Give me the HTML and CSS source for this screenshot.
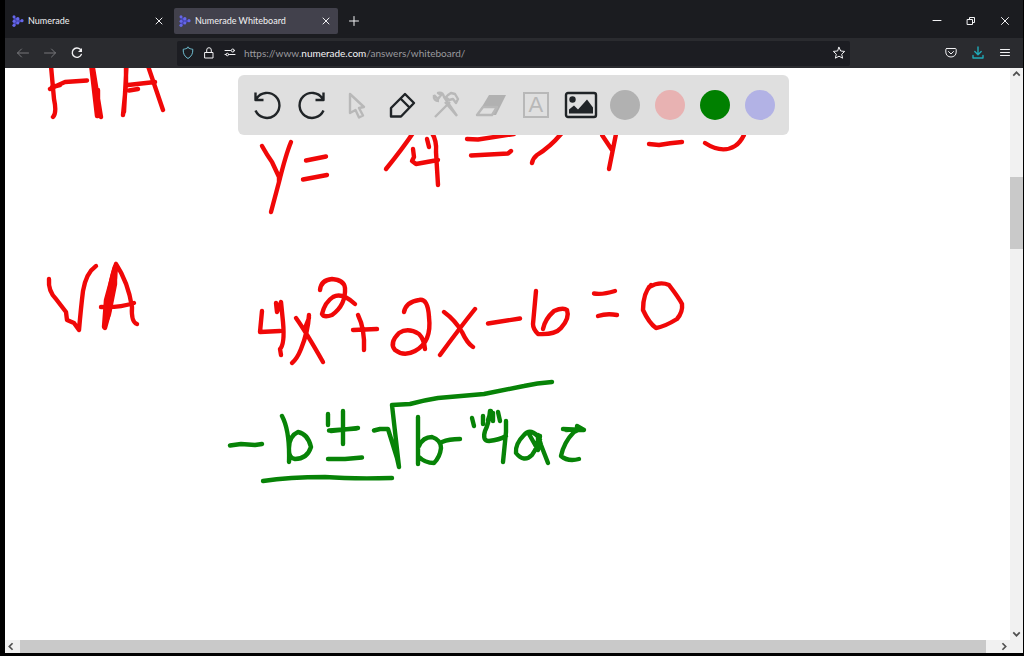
FILE: index.html
```html
<!DOCTYPE html>
<html lang="en">
<head>
<meta charset="utf-8">
<title>Numerade Whiteboard</title>
<link rel="stylesheet" href="styles.css">
</head>
<body>
<svg class="defs" aria-hidden="true">
  <symbol id="logo" viewBox="0 0 12 12">
    <path d="M1.500 1.500 5 3.500 10.500 6 5 9 1.500 11Z" fill="#4646b4"/>
    <g fill="#6566e8"><circle cx="2" cy="1.800" r="1.500"/><circle cx="2" cy="6.300" r="1.500"/><circle cx="2" cy="10.300" r="1.600"/><circle cx="5.800" cy="3.700" r="1.700"/><circle cx="5.800" cy="8" r="1.500"/><circle cx="10" cy="5.700" r="1.600"/></g>
  </symbol>
  <symbol id="cross" viewBox="0 0 10 10"><path d="m2 2 6 6M8 2 2 8"/></symbol>
</svg>
<div class="window">
  <header class="tabs">
    <div class="tab">
      <svg class="logo"><use href="#logo"/></svg>
      <span class="tab-title">Numerade</span>
      <button class="close" aria-label="Close tab"><svg class="line small"><use href="#cross"/></svg></button>
    </div>
    <div class="tab active">
      <svg class="logo"><use href="#logo"/></svg>
      <span class="tab-title">Numerade Whiteboard</span>
      <button class="close" aria-label="Close tab"><svg class="line small"><use href="#cross"/></svg></button>
    </div>
    <button class="new-tab" aria-label="New tab"><svg class="line" viewBox="0 0 14 14"><path d="M7 2.500v9M2.500 7h9"/></svg></button>
    <div class="window-controls">
      <button aria-label="Minimize"><svg class="line" viewBox="0 0 14 14"><path d="M3 6.500h8"/></svg></button>
      <button aria-label="Restore"><svg class="line" viewBox="0 0 14 14"><path d="M3.500 5.500h5v5h-5zM5.500 5V3.500h5v5H9"/></svg></button>
      <button aria-label="Close"><svg class="line" viewBox="0 0 14 14"><path d="m3.500 3.500 7 7m0-7-7 7"/></svg></button>
    </div>
  </header>
  <nav class="nav">
    <div class="history">
      <button class="dim" aria-label="Back"><svg class="line" viewBox="0 0 14 14"><path d="M12.500 7h-11M5.500 3 1.500 7l4 4"/></svg></button>
      <button class="dim" aria-label="Forward"><svg class="line" viewBox="0 0 14 14"><path d="M1.500 7h11m-4-4 4 4-4 4"/></svg></button>
      <button aria-label="Reload"><svg class="line bold" viewBox="0 0 14 14"><path d="M11.300 8.500a4.700 4.700 0 1 1-1-5.200"/><path d="M12 2v4H8z" fill="currentColor" stroke="none"/></svg></button>
    </div>
    <div class="address">
      <svg class="line shield" viewBox="0 0 14 14"><path d="M7 1.500c1.500 1.200 3 1.500 4.800 1.800C12 7.500 10.500 10.500 7 12.500 3.500 10.500 2 7.500 2.200 3.300 4 3 5.500 2.700 7 1.500Z"/></svg>
      <svg class="line" viewBox="0 0 14 14"><path d="M3 6.500h8v5.500H3zM4.700 6V4a2.300 2.300 0 0 1 4.600 0v2"/></svg>
      <svg class="line" viewBox="0 0 14 14"><path d="M2 4.500h5.500M6.500 8.500H12M2 8.500h1"/><circle cx="9.800" cy="4.500" r="1.500"/><circle cx="4.300" cy="8.500" r="1.300"/></svg>
      <a class="url" href="#board">https://www.<b>numerade.com</b>/answers/whiteboard/</a>
      <button class="star" aria-label="Bookmark"><svg class="line" viewBox="0 0 14 14"><path d="m7 1.300 1.700 3.700 4 .4-3 2.800.9 4L7 10.200l-3.600 2 .9-4-3-2.800 4-.4Z"/></svg></button>
    </div>
    <div class="actions">
      <button aria-label="Pocket"><svg class="line" viewBox="0 0 14 14"><path d="M2.800 2.500h8.400q1 0 1 1V6c0 3-2.200 5-5.200 5S1.800 9 1.800 6V3.500q0-1 1-1ZM4.500 5.500 7 8l2.500-2.500"/></svg></button>
      <button class="download" aria-label="Downloads"><svg class="line bold" viewBox="0 0 14 14"><path d="M7 1v7.500M3.800 5.500 7 8.700l3.200-3.200M2 9.500V12h10V9.500"/></svg></button>
      <button aria-label="Menu"><svg class="line" viewBox="0 0 14 14"><path d="M2.500 3.500h9M2.500 6.500h9M2.500 9.500h9"/></svg></button>
    </div>
  </nav>
  <main class="page">
    <section class="board" id="board">
      <svg class="ink" viewBox="5 68 1005 572" preserveAspectRatio="xMinYMin slice" role="img" aria-label="Handwritten equations">
        <g class="red">
          <path d="M51 66 54 99Q57 113 53 117M50 89Q58 85 65 82L87 80.500M52 87 60 85"/>
          <path d="M91 64 97 116M93 68 101 117M98 90v26"/>
          <path d="M126 64V84L123 115M126.500 66 124 112M148 66 163 110M128 85 155 82M129 90.500 138 89"/>
          <path d="M262 146Q267 155 272 162L279 177V182M291 142Q286 154 279 182L271 212M306 160.500 326 156.500M303 179.500 327 175"/>
          <path d="M413 133Q403 148 386 169M413 149 414 157 412 161 416 164 438 160M427 139 429 147M432 133Q437 141 436 152L438 185"/>
          <path d="M467 139 478 139.500 514 134M471 155.500 508 153.500 511 151M561 134Q550 147 537 155 533 158 532 163"/>
          <path d="M602 135 612 150M616 134 609 169M649 144 659 145Q670 143 682 142M705 143Q722 154 735 146 740 143 744 135"/>
          <path d="M49 279Q48 291 56 299L66 312 67 320 74 323 79 330Q81 307 83 291 86 273 96 266"/>
          <path d="M116 264Q109 281 105 328L108 317 115 278 116 264Q128 282 132 307 131 322 137 324M101 307Q119 308 134 303"/>
          <path fill="#f00808" d="M115 267 106 300 104 327 109 314 115 284Z"/>
          <path d="M262 311 260 332 280 331M276 303 277 312 281 302 283 322Q285 344 280 349L281 355M296 318Q306 332 323 362M309 315Q308 332 301 349 297 359 292 363M309 318 305 328"/>
          <path d="M320 290Q321 280 332 279 344 280 345 288 346 305 332 315 324 318 322 314 325 302 333 297 342 292 355 304M358 315Q365 329 364 350M353 330 377 329"/>
          <path d="M404 312Q406 302 419 300 428 298 429 317 432 342 415 351 404 357 395 350 389 343 399 333 408 327 419 334 424 339 425 349"/>
          <path d="M444 312Q455 320 462 332 467 343 473 347M475 309Q459 329 440 355M488 323.500 520 318.500"/>
          <path d="M536 291 533 324Q533 329 538 334 555 335 561 328 570 318 567 310 563 307 554 311 545 319 543 329M594 293.500Q602 295 615 291M598 316Q607 313 617 315"/>
          <path d="M649 287Q660 281 669 285 679 298 682 304 683 312 677 319 664 327 656 328 649 323 643 310 643 293 651 285"/>
        </g>
        <g class="green">
          <path d="M230 445.500 241 444 255 445 262 444M282 416Q290 431 289 462M289 448Q289 436 298 432 308 434 311 447 307 459 295 459 289 458 289 451"/>
          <path d="M328 414V425M343 411V444M329 430.500 357 428.500M331 431 358 428M328 459 345 459 362 457.500M263 481Q289 477 325 477 352 479 392 478"/>
          <path d="M374 430.500 380 429 388 429 397 458 399 467 392 405 410 404Q425 400 438 398L484 394 524 386Q537 383 552 382"/>
          <path d="M418 417V464M419 446Q423 437 432 437 441 440 441 448 440 457 434 463 425 463 419 457M442 442Q449 439 460 439"/>
          <path d="M472 418 474 426M483 416V424M498 412 500 421M491 411 488 420M493 413V421M490 411Q489 423 485 431 482 441 489 441 499 440 506 436M506 421V432L503 462"/>
          <path d="M540 439Q531 427 524 435 515 444 516 453 524 463 532 455 539 446 538 435L541 445 548 463M529 434 538 450 540 436M563 429 584 430 577 426M566 430 580 429 574 432Q564 442 561 456 568 462 579 459"/>
        </g>
      </svg>
      <div class="toolbar" role="toolbar" aria-label="Drawing tools">
        <button aria-label="Undo"><svg viewBox="0 0 30 30"><path d="M3.500 20.500A12.500 12.500 0 1 0 4.500 8.500M3.500 2.500v7.500h8"/></svg></button>
        <button aria-label="Redo"><svg viewBox="0 0 30 30"><path d="M26.500 20.500A12.500 12.500 0 1 1 25.500 8.500M26.500 2.500v7.500h-8"/></svg></button>
        <button class="off" aria-label="Select"><svg viewBox="0 0 30 30"><path d="M8 4 22 17 17 18 21 25.500 17 27.500 13.500 20 8 23Z"/></svg></button>
        <button aria-label="Pen"><svg viewBox="0 0 30 30"><path d="M4 26.500V18L18 4 27 13 14 26.500ZM13.500 8.500 22 17"/></svg></button>
        <button class="off" aria-label="Tools"><svg viewBox="0 0 30 30"><path d="m4 27 10-10M14 12l12 14M3 5l4 4 3-4-3-2q5-1 6 4l13 19M3 5q-1 6 5 6M17 5l3-2 4 1 3 5-2 4-3-4-4 1-3-3ZM14 17l5-5"/></svg></button>
        <button class="off" aria-label="Eraser"><svg class="wide" viewBox="0 0 34 30"><path d="M15 5h17L22 25H3Z" fill="#b1b1b1" stroke="none"/><path d="M9 17h14l-5 8H3Z" fill="#dfdfdf"/></svg></button>
        <button class="off text-tool" aria-label="Text"><span class="letter">A</span></button>
        <button aria-label="Image"><svg class="wide" viewBox="0 0 34 30"><rect x="2" y="3" width="30" height="24" rx="2"/><circle cx="8.500" cy="9.500" r="3.200" fill="#202427" stroke="none"/><path d="M5 23.500v-4l5-4 4 4 9-10 6 8v6Z" fill="#202427" stroke="none"/></svg></button>
        <button class="swatch gray" aria-label="Gray"></button>
        <button class="swatch pink" aria-label="Pink"></button>
        <button class="swatch leaf" aria-label="Green"></button>
        <button class="swatch lilac" aria-label="Lilac"></button>
      </div>
    </section>
    <div class="scroll vertical" aria-hidden="true">
      <svg viewBox="0 0 12 12"><path d="m3 7 3-3 3 3"/></svg>
      <div class="track"><div class="thumb"></div></div>
      <svg viewBox="0 0 12 12"><path d="m3 5 3 3 3-3"/></svg>
    </div>
    <div class="scroll horizontal" aria-hidden="true">
      <svg viewBox="0 0 12 12"><path d="M7 3 4 6l3 3"/></svg>
      <div class="track"><div class="thumb"></div></div>
      <svg viewBox="0 0 12 12"><path d="m5 3 3 3-3 3"/></svg>
    </div>
    <div class="corner"></div>
  </main>
</div>
</body>
</html>
```
FILE: styles.css
```css
* { box-sizing: border-box; }
body { margin: 0; background: #000; font: 9px/14px Lato, "Open Sans", sans-serif; color: #f2f2f4; }
button { border: 0; padding: 0; background: none; color: inherit; font: inherit; display: flex; align-items: center; justify-content: center; }
svg { display: block; flex: none; }
.defs { position: absolute; width: 0; height: 0; }
.window { height: 100vh; padding: 0 1px 3px 5px; display: flex; flex-direction: column; }

.line { width: 14px; height: 14px; fill: none; stroke: currentColor; stroke-width: 1; stroke-linecap: round; stroke-linejoin: round; }
.line.small { width: 10px; height: 10px; }
.line.bold { stroke-width: 1.4; }

.tabs { display: flex; flex: none; height: 38px; padding: 8px 11px 4px 2px; background: #1b1c20; align-items: stretch; }
.tab { display: flex; align-items: center; width: 164px; margin-right: 3px; padding: 0 7px 0 5px; border-radius: 2px; }
.tab.active { background: #42414c; }
.logo { width: 12px; height: 12px; margin-right: 4px; }
.tab-title { flex: 1; white-space: nowrap; }
.close { width: 10px; }
.new-tab { width: 26px; }
.window-controls { display: flex; gap: 20px; margin-left: auto; }

.nav { display: flex; flex: none; align-items: center; height: 30px; padding: 0 11px; background: #2a2b2f; }
.history { display: flex; width: 161px; gap: 13px; }
.dim { color: #76777b; }
.address { flex: 1; display: flex; align-items: center; gap: 7px; height: 25px; padding: 0 4px; background: #1c1d22; border-radius: 2px; }
.shield { stroke: #70bfd2; }
.url { color: #9a9a9f; text-decoration: none; font-size: 10px; }
.url b { color: #f5f5f7; font-weight: 400; }
.star { margin-left: auto; }
.actions { display: flex; gap: 13px; margin-left: 94px; }
.download { color: #20aab8; }

.page { flex: 1; min-height: 0; display: grid; grid-template: minmax(0, 1fr) 13px / minmax(0, 1fr) 13px; background: #fff; }
.board { position: relative; overflow: hidden; }
.ink { width: 100%; height: 100%; }
.ink g { fill: none; stroke-width: 4.4; stroke-linecap: round; stroke-linejoin: round; }
.red { stroke: #f00808; }
.green { stroke: #078307; }

.toolbar { position: absolute; top: 7px; left: 12px; right: 0; width: 551px; max-width: 100%; margin: 0 auto; height: 60px; padding: 0 7px; display: grid; grid-template-columns: repeat(12, 1fr); align-items: center; justify-items: center; background: #dfdfdf; border-radius: 6px; color: #202427; }
.toolbar svg { width: 30px; height: 30px; fill: none; stroke: currentColor; stroke-width: 2.4; stroke-linejoin: round; }
.toolbar .wide { width: 34px; }
.toolbar .off { color: #b8b8b8; }
.letter { width: 26px; height: 26px; border: 2px solid; font: 22px/22px "Liberation Sans", Arial, sans-serif; text-align: center; }
.swatch { width: 30px; height: 30px; border-radius: 50%; }
.gray { background: #b1b1b1; }
.pink { background: #e8b2b2; }
.leaf { background: #008000; }
.lilac { background: #b2b2e5; }

.scroll { display: flex; background: #f1f1f1; }
.scroll svg { width: 13px; height: 13px; fill: none; stroke: #505050; stroke-width: 1.6; }
.vertical { flex-direction: column; }
.track { flex: 1; min-width: 0; min-height: 0; }
.thumb { background: #c9c9c9; }
.vertical .track { padding-top: 96px; }
.vertical .thumb { height: 72px; }
.horizontal .track { padding: 0 11px 0 2px; }
.horizontal .thumb { height: 100%; }
.corner { background: #f1f1f1; }
```
